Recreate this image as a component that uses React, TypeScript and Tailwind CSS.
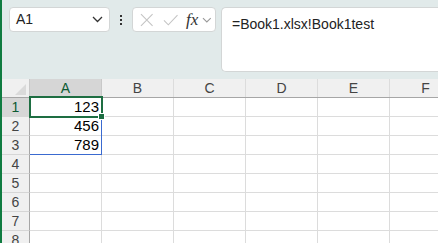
import React from "react";

const cols = ["A", "B", "C", "D", "E", "F"];
const rows = [1, 2, 3, 4, 5, 6, 7, 8];
const data: Record<number, string> = { 1: "123", 2: "456", 3: "789" };

export default function App() {
  return (
    <div
      className="w-[438px] h-[243px] overflow-hidden flex bg-white"
      style={{ fontFamily: '"Liberation Sans", Arial, sans-serif' }}
    >
      <div className="w-[2px] shrink-0 bg-[#107c41]" />
      <div className="flex-1 flex flex-col min-w-0">
        {/* toolbar */}
        <div className="h-[79px] shrink-0 bg-[#e1eaea] flex items-start pt-[7px] pl-[7px] gap-0">
          <div className="w-[101px] h-[25px] bg-white border border-[#d3d6d6] rounded-[4px] flex items-center pl-[6px] pr-[6px] text-[14px] text-[#222]">
            <span className="flex-1">A1</span>
            <svg width="11" height="7" viewBox="0 0 11 7">
              <path d="M1 1 L5.5 5.5 L10 1" fill="none" stroke="#333" strokeWidth="1.3" />
            </svg>
          </div>
          <div className="w-[22px] h-[25px] flex flex-col items-center justify-center gap-[2px]">
            <div className="w-[2px] h-[2px] bg-[#333]" />
            <div className="w-[2px] h-[2px] bg-[#333]" />
            <div className="w-[2px] h-[2px] bg-[#333]" />
          </div>
          <div className="w-[84px] h-[25px] bg-white border border-[#d3d6d6] rounded-[4px] flex items-center pl-[6px] pr-[3px]">
            <svg width="14" height="14" viewBox="0 0 14 14" className="ml-[1px]">
              <path d="M1 1 L13 13 M13 1 L1 13" stroke="#c4c4c4" strokeWidth="1.1" />
            </svg>
            <svg width="16" height="12" viewBox="0 0 16 12" className="ml-[9px]">
              <path d="M1 6.5 L5.5 11 L15 1" fill="none" stroke="#c4c4c4" strokeWidth="1.1" />
            </svg>
            <span
              className="ml-[8px] text-[17px] italic text-[#333] leading-none"
              style={{ fontFamily: '"Liberation Serif", "DejaVu Serif", serif' }}
            >
              fx
            </span>
            <svg width="10" height="6" viewBox="0 0 10 6" className="ml-[4px]">
              <path d="M1 1 L5 5 L9 1" fill="none" stroke="#999" strokeWidth="1.1" />
            </svg>
          </div>
          <div className="ml-[5px] flex-1 h-[65px] bg-white border border-[#d3d6d6] rounded-l-[5px] border-r-0 pl-[10px] pt-[6px] text-[14px] text-[#222]">
            =Book1.xlsx!Book1test
          </div>
        </div>
        {/* header row */}
        <div className="flex h-[19px] shrink-0 bg-[#f0f0f0] border-b border-[#a6a6a6]">
          <div className="w-[28px] shrink-0 relative border-r border-[#c8c8c8]">
            <svg width="11" height="11" viewBox="0 0 11 11" className="absolute right-[3px] bottom-[2px]">
              <path d="M11 0 L11 11 L0 11 Z" fill="#dadada" />
            </svg>
          </div>
          {cols.map((c, i) => (
            <div
              key={c}
              className={`w-[72px] shrink-0 flex items-center justify-center text-[14px] border-r ${
                i === 0 ? "bg-[#d6d6d6] text-[#0d5a32] border-[#c8c8c8]" : "text-[#444] border-[#dcdcdc]"
              }`}
            >
              {c}
            </div>
          ))}
        </div>
        {rows.map((r) => (
          <div key={r} className="flex h-[19px] shrink-0">
            <div
              className={`w-[28px] shrink-0 flex items-center justify-center text-[14px] border-r border-b border-r-[#a6a6a6] border-b-[#d6d6d6] ${
                r === 1 ? "bg-[#d6d6d6] text-[#0d5a32]" : "bg-[#f0f0f0] text-[#444]"
              }`}
            >
              {r}
            </div>
            {cols.map((c, i) => (
              <div
                key={c}
                className="w-[72px] shrink-0 relative border-r border-b border-[#dcdcdc] flex items-center justify-end pr-[2px] text-[15px] text-black"
              >
                {i === 0 && data[r] ? data[r] : ""}
                {i === 0 && r === 1 && (
                  <>
                    <div className="absolute left-[-1px] top-[-2px] right-[-2px] bottom-[-2px] border-2 border-[#1e6e42] z-10" />
                    <div className="absolute right-[-4px] bottom-[-4px] w-[5px] h-[5px] bg-[#1e6e42] border border-white box-content z-20" />
                  </>
                )}
                {i === 0 && (r === 2 || r === 3) && (
                  <div
                    className={`absolute left-0 top-0 right-[-1px] bottom-[-1px] border-r border-[#3a6ad0] ${
                      r === 3 ? "border-b" : ""
                    }`}
                  />
                )}
              </div>
            ))}
          </div>
        ))}
      </div>
    </div>
  );
}
